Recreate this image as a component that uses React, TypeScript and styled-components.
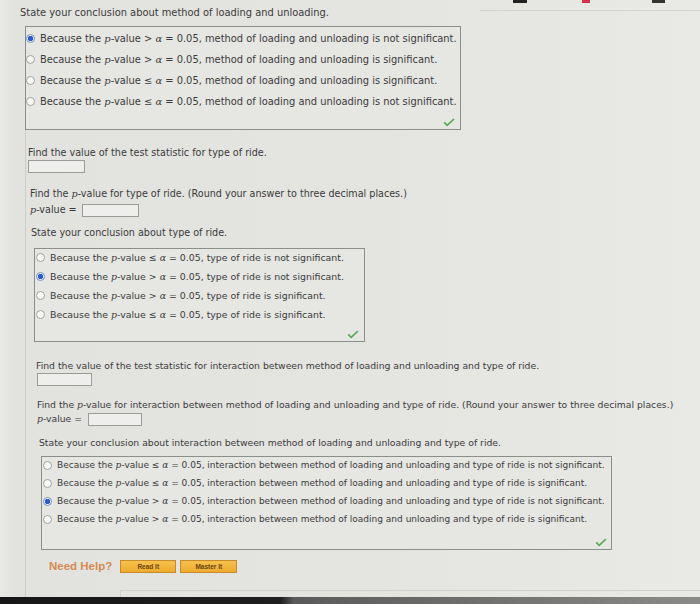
import styled, { createGlobalStyle } from 'styled-components';

const GlobalStyle = createGlobalStyle`
  html, body {
    margin: 0;
    padding: 0;
    background: #e3e3e0;
  }
  body {
    font-family: "DejaVu Sans", Verdana, sans-serif;
    color: #3b3b3b;
  }
`;

interface Choice {
	op: string;
	rest: string;
	checked?: boolean;
}

const methodChoices: Choice[] = [
	{ op: '>', rest: 'method of loading and unloading is not significant.', checked: true },
	{ op: '>', rest: 'method of loading and unloading is significant.' },
	{ op: '≤', rest: 'method of loading and unloading is significant.' },
	{ op: '≤', rest: 'method of loading and unloading is not significant.' },
];

const rideChoices: Choice[] = [
	{ op: '≤', rest: 'type of ride is not significant.' },
	{ op: '>', rest: 'type of ride is not significant.', checked: true },
	{ op: '>', rest: 'type of ride is significant.' },
	{ op: '≤', rest: 'type of ride is significant.' },
];

const interactionChoices: Choice[] = [
	{ op: '≤', rest: 'interaction between method of loading and unloading and type of ride is not significant.' },
	{ op: '≤', rest: 'interaction between method of loading and unloading and type of ride is significant.' },
	{ op: '>', rest: 'interaction between method of loading and unloading and type of ride is not significant.', checked: true },
	{ op: '>', rest: 'interaction between method of loading and unloading and type of ride is significant.' },
];

function P() {
	return <Ital>p</Ital>;
}

function Check() {
	return (
		<svg width="12" height="9" viewBox="0 0 12 9">
			<path d="M0.6 5 L4.2 8.6 L11.6 1.6 L10.3 0.4 L4.2 6.2 L2 3.8 Z" fill="#5ba857" />
		</svg>
	);
}

interface ListProps {
	choices: Choice[];
	width: number;
	size: number;
	padTop: number;
	padLeft: number;
	gap: number;
	footer: number;
	checkPad: number;
}

function ChoiceList({ choices, width, size, padTop, padLeft, gap, footer, checkPad }: ListProps) {
	return (
		<ChoiceBox $width={width} $size={size} $padTop={padTop} $padLeft={padLeft} $gap={gap}>
			{choices.map((c, i) => (
				<ChoiceRow key={i}>
					<Radio $checked={!!c.checked} />
					<span>
						Because the <P />-value {c.op} <Ital>α</Ital> = 0.05, {c.rest}
					</span>
				</ChoiceRow>
			))}
			<BoxFooter $height={footer} $pad={checkPad}>
				<Check />
			</BoxFooter>
		</ChoiceBox>
	);
}

export default function App() {
	return (
		<Page>
			<GlobalStyle />
			<TopRow>
				<Block $x={0} $y={7}>
					<Prompt>State your conclusion about method of loading and unloading.</Prompt>
				</Block>
				<TopIcons>
					<IconBit $color="#222" $w={14} $gap={33} />
					<IconBit $color="#d8324a" $w={8} $gap={55} />
					<IconBit $color="#333" $w={13} $gap={62} />
				</TopIcons>
			</TopRow>

			<Section $size={9.9}>
				<Block $x={25} $y={7}>
					<ChoiceList
						choices={methodChoices}
						width={436}
						size={9.9}
						padTop={3.5}
						padLeft={0}
						gap={6}
						footer={14}
						checkPad={5}
					/>
				</Block>
			</Section>

			<LowerPanel>
				<Section $size={9.6}>
					<Block $x={2} $y={17}>
						<Prompt>Find the value of the test statistic for type of ride.</Prompt>
					</Block>
					<Block $x={2} $y={1}>
						<AnswerInput $width={57} />
					</Block>
					<Block $x={4} $y={15}>
						<Prompt>
							Find the <P />-value for type of ride. (Round your answer to three decimal places.)
						</Prompt>
					</Block>
					<Block $x={4} $y={4}>
						<InlineRow $gap={5}>
							<span>
								<P />-value =
							</span>
							<AnswerInput $width={57} />
						</InlineRow>
					</Block>
					<Block $x={5} $y={10}>
						<Prompt>State your conclusion about type of ride.</Prompt>
					</Block>
					<Block $x={8} $y={9}>
						<ChoiceList
							choices={rideChoices}
							width={331}
							size={9.4}
							padTop={1}
							padLeft={1}
							gap={4}
							footer={15}
							checkPad={5}
						/>
					</Block>
				</Section>

				<Section $size={9.25}>
					<Block $x={10} $y={18}>
						<Prompt>
							Find the value of the test statistic for interaction between method of loading and unloading and type of
							ride.
						</Prompt>
					</Block>
					<Block $x={11} $y={1}>
						<AnswerInput $width={55} />
					</Block>
					<Block $x={11} $y={13}>
						<Prompt>
							Find the <P />-value for interaction between method of loading and unloading and type of ride. (Round your
							answer to three decimal places.)
						</Prompt>
					</Block>
					<Block $x={11} $y={2}>
						<InlineRow $gap={6}>
							<span>
								<P />-value =
							</span>
							<AnswerInput $width={54} />
						</InlineRow>
					</Block>
					<Block $x={13} $y={11}>
						<Prompt>
							State your conclusion about interaction between method of loading and unloading and type of ride.
						</Prompt>
					</Block>
					<Block $x={15} $y={7}>
						<ChoiceList
							choices={interactionChoices}
							width={571}
							size={9.0}
							padTop={1}
							padLeft={1}
							gap={3}
							footer={19}
							checkPad={4}
						/>
					</Block>
					<Block $x={23} $y={10}>
						<HelpRow>
							<HelpLabel>Need Help?</HelpLabel>
							<HelpButton $width={56}>Read It</HelpButton>
							<HelpButton $width={57}>Master It</HelpButton>
						</HelpRow>
					</Block>
				</Section>
				<NextBox />
			</LowerPanel>
			<Bezel />
		</Page>
	);
}

const Page = styled.div`
  width: 700px;
  height: 604px;
  overflow: hidden;
  display: flex;
  flex-direction: column;
  background: linear-gradient(90deg, #e9e9e6 0px, #e2e2df 14px, #e4e4e1 55%, #e9e9e6 100%);
`;

const TopRow = styled.div`
  display: flex;
  align-items: flex-start;
  justify-content: space-between;
  padding-left: 20px;
  font-size: 9.9px;
`;

const TopIcons = styled.div`
  width: 220px;
  height: 10px;
  display: flex;
  align-items: flex-start;
  border-bottom: 1px solid #d2d2cf;
`;

const IconBit = styled.span<{ $color: string; $w: number; $gap: number }>`
  display: block;
  margin-left: ${({ $gap }) => $gap}px;
  width: ${({ $w }) => $w}px;
  height: 3px;
  background: ${({ $color }) => $color};
`;

const Section = styled.div<{ $size: number }>`
  display: flex;
  flex-direction: column;
  align-items: flex-start;
  font-size: ${({ $size }) => $size}px;
`;

const Block = styled.div<{ $x: number; $y: number }>`
  margin-left: ${({ $x }) => $x}px;
  margin-top: ${({ $y }) => $y}px;
`;

const LowerPanel = styled.div`
  margin-left: 25px;
  flex: 1;
  min-height: 0;
  border-left: 1px solid #cdcdca;
  display: flex;
  flex-direction: column;
`;

const Prompt = styled.div`
  height: 12px;
  line-height: 12px;
  white-space: nowrap;
`;

const Ital = styled.i`
  font-family: "DejaVu Serif", "Liberation Serif", serif;
  font-style: italic;
`;

const AnswerInput = styled.span<{ $width: number }>`
  display: block;
  box-sizing: border-box;
  width: ${({ $width }) => $width}px;
  height: 13px;
  border: 1px solid #9b9b98;
  background: #eeeeec;
`;

const InlineRow = styled.div<{ $gap: number }>`
  display: flex;
  align-items: center;
  gap: ${({ $gap }) => $gap}px;
  line-height: 12px;
`;

const ChoiceBox = styled.div<{ $width: number; $size: number; $padTop: number; $padLeft: number; $gap: number }>`
  box-sizing: border-box;
  width: ${({ $width }) => $width}px;
  font-size: ${({ $size }) => $size}px;
  border: 1px solid #8b8f8a;
  background: #e6e6e3;
  padding: ${({ $padTop }) => $padTop}px 0 0 ${({ $padLeft }) => $padLeft}px;
  display: flex;
  flex-direction: column;
  gap: ${({ $gap }) => $gap}px;
`;

const ChoiceRow = styled.div`
  height: 15px;
  display: flex;
  align-items: center;
  gap: 5px;
  white-space: nowrap;
`;

const Radio = styled.span<{ $checked: boolean }>`
  box-sizing: border-box;
  flex: none;
  width: 9px;
  height: 9px;
  border-radius: 50%;
  border: 1px solid ${({ $checked }) => ($checked ? '#7894cc' : '#a2a2a0')};
  background: ${({ $checked }) =>
		$checked ? 'radial-gradient(circle, #2d5ccc 0 2.4px, #f2f2f2 3px)' : '#f7f7f5'};
`;

const BoxFooter = styled.div<{ $height: number; $pad: number }>`
  height: ${({ $height }) => $height}px;
  display: flex;
  align-items: flex-end;
  justify-content: flex-end;
  padding: 0 ${({ $pad }) => $pad}px 2px 0;
  box-sizing: border-box;
`;

const HelpRow = styled.div`
  display: flex;
  align-items: center;
  gap: 4px;
`;

const HelpLabel = styled.span`
  font-family: "Liberation Sans", Arial, sans-serif;
  font-weight: bold;
  font-size: 11.5px;
  line-height: 13px;
  color: #d68b52;
  margin-right: 4px;
`;

const HelpButton = styled.span<{ $width: number }>`
  box-sizing: border-box;
  width: ${({ $width }) => $width}px;
  height: 13px;
  display: flex;
  align-items: center;
  justify-content: center;
  background: linear-gradient(#f5c14f, #eeab2e);
  border: 1px solid #c88a2c;
  font-family: "Liberation Sans", Arial, sans-serif;
  font-weight: bold;
  font-size: 6.5px;
  color: #6a4412;
`;

const NextBox = styled.div`
  margin: 17px 0 0 94px;
  flex: 1;
  border-top: 1px solid #d0d0cd;
  border-left: 1px solid #d0d0cd;
`;

const Bezel = styled.div`
  height: 7px;
  flex: none;
  background: linear-gradient(90deg, #161616 0%, #1e1e1e 40%, #5a5a5a 42%, #8a8a88 100%);
`;
